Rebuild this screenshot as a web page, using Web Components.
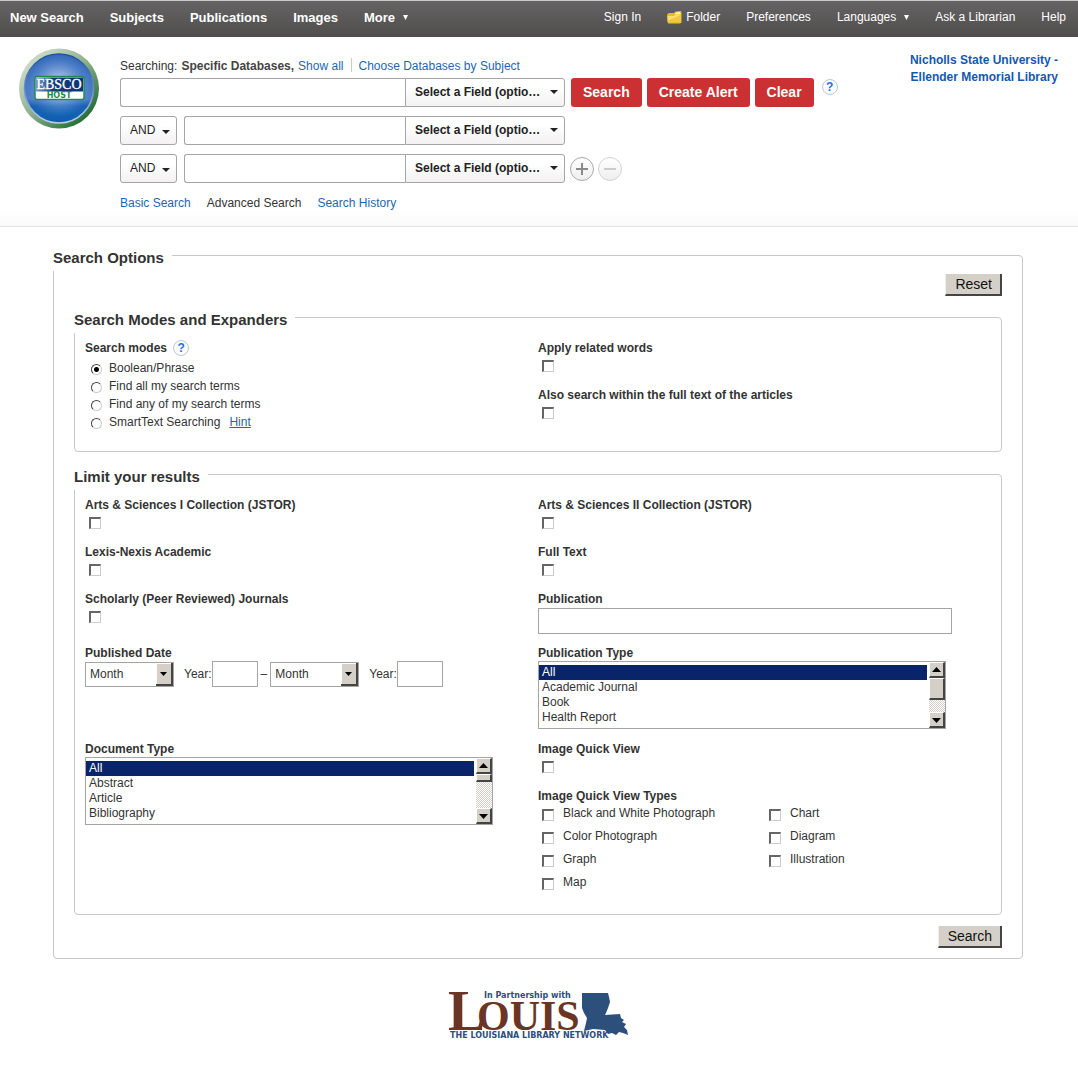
<!DOCTYPE html>
<html lang="en">
<head>
<meta charset="utf-8">
<title>Advanced Search</title>
<style>
    body {
        margin: 0;
        background: #fff;
        color: #333;
        font: 12px/16px "Liberation Sans", Arial, sans-serif;
    }
    main {
        padding: 12px 55px 0 53px;
    }
    .actions {
        display: flex;
        justify-content: flex-end;
    }
    .actions.top {
        padding: 3px 0 5px;
    }
    .actions.bottom {
        padding: 11px 0 10px;
    }
    panel-box + panel-box {
        margin-top: 6px;
    }
    .grid {
        display: grid;
        grid-template-columns: minmax(0, 453px) minmax(0, 1fr);
        align-items: start;
    }
    footer {
        display: flex;
        justify-content: center;
        padding: 31px 0 30px;
    }
</style>
</head>
<body>
<top-bar></top-bar>
<search-header></search-header>
<main>
    <panel-box>
        <span slot="title">Search Options</span>
        <div class="actions top"><classic-button>Reset</classic-button></div>
        <panel-box inset>
            <span slot="title">Search Modes and Expanders</span>
            <div class="grid">
                <search-modes></search-modes>
                <div>
                    <check-field label="Apply related words"></check-field>
                    <check-field label="Also search within the full text of the articles"></check-field>
                </div>
            </div>
        </panel-box>
        <panel-box inset>
            <span slot="title">Limit your results</span>
            <div class="grid">
                <check-field label="Arts &amp; Sciences I Collection (JSTOR)"></check-field>
                <check-field label="Arts &amp; Sciences II Collection (JSTOR)"></check-field>
                <check-field label="Lexis-Nexis Academic"></check-field>
                <check-field label="Full Text"></check-field>
                <check-field label="Scholarly (Peer Reviewed) Journals"></check-field>
                <text-field label="Publication"></text-field>
                <date-range label="Published Date"></date-range>
                <list-field label="Publication Type" thumb="22" options="All|Academic Journal|Book|Health Report"></list-field>
                <list-field label="Document Type" thumb="8" options="All|Abstract|Article|Bibliography"></list-field>
                <div>
                    <check-field label="Image Quick View"></check-field>
                    <check-group label="Image Quick View Types" options="Black and White Photograph|Chart|Color Photograph|Diagram|Graph|Illustration|Map"></check-group>
                </div>
            </div>
        </panel-box>
        <div class="actions bottom"><classic-button>Search</classic-button></div>
    </panel-box>
</main>
<footer><louis-logo></louis-logo></footer>

<script>
    // styles that every control needs inside its own shadow root
    const baseCss = `
        :host { display: block; }
        * { box-sizing: border-box; }
        input, select, button { font: inherit; color: inherit; margin: 0; }
        a { color: #1f66b0; text-decoration: none; }
        .label { display: block; font-weight: bold; }
    `;

    const checkCss = `
        input[type=checkbox] {
            appearance: none;
            flex: none;
            display: block;
            width: 12px;
            height: 12px;
            background: #fff;
            border: 1px solid #ccc;
            border-top: 2px solid #666;
            border-left: 2px solid #666;
        }
    `;

    class BaseElement extends HTMLElement {
        connectedCallback() {
            if (this.shadowRoot) return;
            this.attachShadow({ mode: 'open' });
            this.shadowRoot.innerHTML = `<style>${baseCss}</style>` + this.render();
        }
        get label() {
            return this.getAttribute('label').replace(/&/g, '&amp;');
        }
        get options() {
            return this.getAttribute('options').split('|');
        }
    }

    class TopBar extends BaseElement {
        render() {
            return `
                <style>
                    :host {
                        border-top: 1px solid #c9c9c7;
                        background: linear-gradient(#656363, #504d4d);
                        color: #fff;
                    }
                    nav { display: flex; justify-content: space-between; height: 36px; padding: 0 12px 4px 10px; }
                    div { display: flex; align-items: center; gap: 26px; }
                    .main { font-size: 13px; font-weight: bold; padding-top: 1px; }
                    a { display: flex; align-items: center; color: #fff; white-space: nowrap; }
                    .arrow { width: 5px; height: 5px; margin-left: 8px; fill: #fff; }
                    .folder { margin-right: 4px; }
                </style>
                <nav>
                    <div class="main">
                        <a href="#">New Search</a>
                        <a href="#">Subjects</a>
                        <a href="#">Publications</a>
                        <a href="#">Images</a>
                        <a href="#">More <svg class="arrow" viewBox="0 0 5 5"><path d="M0 0h5L2.5 5z"/></svg></a>
                    </div>
                    <div>
                        <a href="#">Sign In</a>
                        <a href="#"><svg class="folder" width="15" height="13" viewBox="0 0 15 13">
                            <path d="M0 3.5 2 2h5l1.5-1.5L14 0l.5 2v9.5L13 12.500H1z" fill="#e2bd2c"/>
                            <path d="M8.5 1.5 13 1l.5 2-5.500.5z" fill="#fff6b5"/>
                            <path d="M.5 5h6L9 3.5h5v7.500H.5z" fill="#f8df6a"/>
                            <path d="M1 9.5 14 4v7.500H1z" fill="#efc63c"/>
                        </svg>Folder</a>
                        <a href="#">Preferences</a>
                        <a href="#">Languages <svg class="arrow" viewBox="0 0 5 5"><path d="M0 0h5L2.5 5z"/></svg></a>
                        <a href="#">Ask a Librarian</a>
                        <a href="#">Help</a>
                    </div>
                </nav>
            `;
        }
    }
    customElements.define('top-bar', TopBar);

    class EbscoLogo extends BaseElement {
        render() {
            return `
                <svg width="80" height="81" viewBox="0 0 80 81" role="img" aria-label="EBSCO Host">
                    <defs>
                        <linearGradient id="ring" x1="0.1" y1="0.1" x2="0.85" y2="0.9">
                            <stop offset="0" stop-color="#d3e0cf"/>
                            <stop offset="0.5" stop-color="#8fb08c"/>
                            <stop offset="1" stop-color="#1f6a33"/>
                        </linearGradient>
                        <linearGradient id="ball" x1="0" y1="0" x2="0" y2="1">
                            <stop offset="0" stop-color="#2f65b8"/>
                            <stop offset="0.65" stop-color="#4f7fc8"/>
                            <stop offset="0.75" stop-color="#1a63b4"/>
                            <stop offset="1" stop-color="#0a5fb0"/>
                        </linearGradient>
                        <radialGradient id="glow">
                            <stop offset="0" stop-color="#dfe8fa"/>
                            <stop offset="1" stop-color="#6f9ade" stop-opacity="0"/>
                        </radialGradient>
                        <linearGradient id="plate" x1="0" y1="0" x2="1" y2="0">
                            <stop offset="0" stop-color="#7b9cc4"/>
                            <stop offset="0.35" stop-color="#123e7c"/>
                            <stop offset="1" stop-color="#0b3474"/>
                        </linearGradient>
                        <linearGradient id="rim" x1="0" y1="0" x2="0" y2="1">
                            <stop offset="0" stop-color="#1b4f9c"/>
                            <stop offset="1" stop-color="#b9cdf0"/>
                        </linearGradient>
                    </defs>
                    <circle cx="40" cy="40.5" r="40" fill="url(#ring)"/>
                    <circle cx="40" cy="40.5" r="34.5" fill="url(#ball)" stroke="url(#rim)" stroke-width="1.5"/>
                    <ellipse cx="40" cy="37" rx="33" ry="32" fill="url(#glow)"/>
                    <rect x="16" y="28.5" width="49" height="23" rx="2" fill="#fff" stroke="#1f8a50" stroke-width="1.5"/>
                    <rect x="17" y="29.5" width="47" height="14" fill="url(#plate)"/>
                    <text x="40" y="41" text-anchor="middle" fill="#fff" stroke="#fff" stroke-width="0.3" font-family="Liberation Serif, serif" font-size="14">EBSCO</text>
                    <text x="40" y="50" text-anchor="middle" fill="#1f8a50" font-family="DejaVu Sans, sans-serif" font-weight="bold" font-size="8">HOST</text>
                </svg>
            `;
        }
    }
    customElements.define('ebsco-logo', EbscoLogo);

    class HelpIcon extends BaseElement {
        render() {
            return `
                <style>
                    button {
                        display: block;
                        width: 16px;
                        height: 16px;
                        padding: 0;
                        border: 1px solid #bfc6cf;
                        border-radius: 50%;
                        background: #fbfbfd;
                        color: #2b6fe0;
                        font-weight: bold;
                        line-height: 14px;
                        text-align: center;
                    }
                </style>
                <button type="button" aria-label="Help">?</button>
            `;
        }
    }
    customElements.define('help-icon', HelpIcon);

    class SearchRow extends BaseElement {
        render() {
            const op = this.hasAttribute('operator') ? `
                <span class="drop op">
                    <select aria-label="Operator"><option>AND</option><option>OR</option><option>NOT</option></select>
                    <svg width="8" height="4" viewBox="0 0 8 4"><path d="M0 0h8L4 4z"/></svg>
                </span>` : '';
            return `
                <style>
                    :host { display: flex; align-items: center; height: 29px; }
                    .box { display: flex; width: 445px; height: 29px; }
                    .drop { display: grid; }
                    .drop > * { grid-area: 1 / 1; }
                    .drop svg { align-self: center; justify-self: end; margin: 0 7px 1px 0; fill: #222; pointer-events: none; }
                    input, select { height: 29px; border: 1px solid #a5a5a5; background: #fff; }
                    input { flex: 1; min-width: 0; border-right: 0; border-radius: 3px 0 0 3px; padding: 0 8px; }
                    select {
                        appearance: none;
                        width: 100%;
                        padding: 0 20px 2px 9px;
                        background: linear-gradient(#fff 30%, #f3f1f2);
                        color: #222;
                    }
                    .op { width: 57px; margin-right: 7px; }
                    .op select { border-radius: 3px; }
                    .op svg { margin: 3px 7px 0 0; }
                    .field { width: 160px; font-weight: bold; }
                    .field select { border-radius: 0 3px 3px 0; }
                </style>
                <span class="box">
                    ${op}
                    <input type="text" aria-label="Search term">
                    <span class="drop field">
                        <select aria-label="Field"><option>Select a Field (optio…</option></select>
                        <svg width="8" height="4" viewBox="0 0 8 4"><path d="M0 0h8L4 4z"/></svg>
                    </span>
                </span>
                <slot></slot>
            `;
        }
    }
    customElements.define('search-row', SearchRow);

    class SearchHeader extends BaseElement {
        render() {
            return `
                <style>
                    :host {
                        display: flex;
                        align-items: flex-start;
                        padding: 11px 20px 15px 19px;
                        border-bottom: 1px solid #e3e3e3;
                        background: linear-gradient(#fff 90%, #fafafa);
                    }
                    form { flex: 1; padding: 10px 0 0 21px; }
                    search-row { margin-bottom: 9px; }
                    .db { display: flex; height: 20px; }
                    .db b { margin: 0 4px; color: #444; }
                    .db a + a { margin-left: 8px; padding-left: 6px; border-left: 1px solid #ccc; height: 14px; }
                    .red {
                        height: 29px;
                        margin-left: 5px;
                        padding: 0 12px 1px;
                        border: 0;
                        border-radius: 3px;
                        background: #cb3033;
                        color: #fff;
                        font-size: 14px;
                        font-weight: bold;
                    }
                    .first { margin-left: 6px; }
                    help-icon { margin: 0 0 11px 8px; }
                    .round {
                        display: flex;
                        width: 24px;
                        height: 24px;
                        margin-left: 4px;
                        padding: 5px;
                        border: 1px solid #aaa;
                        border-radius: 50%;
                        background: linear-gradient(#fff, #eee);
                    }
                    .round.add { margin-left: 5px; }
                    .round path { stroke: #8a8a8a; stroke-width: 2; }
                    .round:disabled { border-color: #d3d3d3; }
                    .round:disabled path { stroke: #ccc; }
                    .tabs { display: flex; gap: 16px; padding-top: 3px; }
                    .org { font-weight: bold; line-height: 17px; text-align: right; padding-top: 4px; color: #1458b0; }
                </style>
                <ebsco-logo></ebsco-logo>
                <form>
                    <div class="db">Searching: <b>Specific Databases,</b> <a href="#">Show all</a><a href="#">Choose Databases by Subject</a></div>
                    <search-row>
                        <button type="button" class="red first">Search</button>
                        <button type="button" class="red">Create Alert</button>
                        <button type="button" class="red">Clear</button>
                        <help-icon></help-icon>
                    </search-row>
                    <search-row operator></search-row>
                    <search-row operator>
                        <button type="button" class="round add" aria-label="Add row"><svg width="12" height="12" viewBox="0 0 12 12"><path d="M0 6h12M6 0v12"/></svg></button>
                        <button type="button" class="round" aria-label="Remove row" disabled><svg width="12" height="12" viewBox="0 0 12 12"><path d="M0 6h12"/></svg></button>
                    </search-row>
                    <div class="tabs"><a href="#">Basic Search</a><span>Advanced Search</span><a href="#">Search History</a></div>
                </form>
                <a class="org" href="#">Nicholls State University -<br>Ellender Memorial Library</a>
            `;
        }
    }
    customElements.define('search-header', SearchHeader);

    class PanelBox extends BaseElement {
        render() {
            return `
                <style>
                    fieldset {
                        min-width: 0;
                        margin: 0;
                        padding: 0 20px;
                        border: 1px solid #c8c8c8;
                        border-radius: 4px;
                    }
                    /* the white legend also hides the corner of the border */
                    legend {
                        height: 32px;
                        margin-left: -21px;
                        padding: 6px 8px 0 0;
                        background: #fff;
                        font-size: 15px;
                        font-weight: bold;
                        line-height: 26px;
                    }
                    :host([inset]) fieldset { padding: 7px 10px 17px; }
                    :host([inset]) legend { margin-left: -11px; }
                </style>
                <fieldset>
                    <legend><slot name="title"></slot></legend>
                    <slot></slot>
                </fieldset>
            `;
        }
    }
    customElements.define('panel-box', PanelBox);

    class ClassicButton extends BaseElement {
        render() {
            return `
                <style>
                    button {
                        display: block;
                        height: 22px;
                        padding: 0 8px 0 9px;
                        border: solid #444;
                        border-width: 0 2px 2px 0;
                        border-left: 1px solid #eee;
                        background: #d4d0c8;
                        color: #111;
                        font-size: 14px;
                        line-height: 20px;
                    }
                </style>
                <button type="button"><slot></slot></button>
            `;
        }
    }
    customElements.define('classic-button', ClassicButton);

    class SearchModes extends BaseElement {
        render() {
            const modes = ['Boolean/Phrase', 'Find all my search terms', 'Find any of my search terms', 'SmartText Searching'];
            const rows = modes.map((mode, indx) => `
                <div class="row">
                    <input type="radio" name="mode" id="mode${indx}" ${indx == 0 ? 'checked' : ''}>
                    <label for="mode${indx}">${mode}</label>
                    ${indx == 3 ? '<a href="#">Hint</a>' : ''}
                </div>`).join('');
            return `
                <style>
                    .head { display: flex; align-items: center; gap: 6px; height: 16px; margin-bottom: 3px; font-weight: bold; }
                    .row { display: flex; align-items: center; height: 18px; padding-left: 6px; }
                    .row a { margin-left: 9px; text-decoration: underline; }
                    input {
                        appearance: none;
                        width: 11px;
                        height: 11px;
                        margin: 2px 7px 0 0;
                        border: 1px solid;
                        border-color: #444 #ccc #ccc #444;
                        border-radius: 50%;
                        background: #fff;
                    }
                    input:checked { background: radial-gradient(circle, #000 2px, #fff 3px); }
                </style>
                <div class="head">Search modes <help-icon></help-icon></div>
                ${rows}
            `;
        }
    }
    customElements.define('search-modes', SearchModes);

    class CheckField extends BaseElement {
        render() {
            return `
                <style>
                    ${checkCss}
                    :host { padding-bottom: 15px; }
                    input[type=checkbox] { margin: 4px 0 0 4px; }
                </style>
                <label class="label" for="check">${this.label}</label>
                <input type="checkbox" id="check">
            `;
        }
    }
    customElements.define('check-field', CheckField);

    class TextField extends BaseElement {
        render() {
            return `
                <style>
                    :host { padding-bottom: 11px; }
                    input {
                        display: block;
                        width: 100%;
                        max-width: 414px;
                        height: 26px;
                        margin-top: 1px;
                        border: 1px solid #a5a5a5;
                    }
                </style>
                <label class="label" for="text">${this.label}</label>
                <input type="text" id="text">
            `;
        }
    }
    customElements.define('text-field', TextField);

    class DateRange extends BaseElement {
        month(name) {
            return `
                <span class="month">
                    <select aria-label="${name} month"><option>Month</option></select>
                    <svg width="17" height="23" viewBox="0 0 17 23">
                        <path d="M0 0h17v23H0z" fill="#444"/>
                        <path d="M0 0h15v21H0z" fill="#fff"/>
                        <path d="M1 1h14v20H1z" fill="#d4d0c8"/>
                        <path d="M4 9h7l-3.5 4z"/>
                    </svg>
                </span>`;
        }
        render() {
            return `
                <style>
                    .row { display: flex; align-items: center; }
                    .month { display: grid; margin-right: 10px; }
                    .month > * { grid-area: 1 / 1; }
                    .month svg { align-self: center; justify-self: end; margin-right: 1px; pointer-events: none; }
                    select { appearance: none; width: 89px; height: 25px; padding: 0 20px 0 4px; border: 1px solid #a5a5a5; background: #fff; }
                    input { width: 46px; height: 26px; border: 1px solid #a5a5a5; }
                    .dash { margin: 0 3px; }
                </style>
                <span class="label">${this.label}</span>
                <div class="row">
                    ${this.month('From')}
                    <label for="from">Year:</label><input type="text" id="from">
                    <span class="dash">–</span>
                    ${this.month('To')}
                    <label for="to">Year:</label><input type="text" id="to">
                </div>
            `;
        }
    }
    customElements.define('date-range', DateRange);

    class ListField extends BaseElement {
        render() {
            const thumb = this.getAttribute('thumb');
            return `
                <style>
                    :host { padding-bottom: 12px; }
                    .box { display: flex; width: 408px; max-width: 100%; height: 68px; border: 1px solid #a5a5a5; }
                    select {
                        appearance: none;
                        flex: 1;
                        min-width: 0;
                        height: 66px;
                        padding: 3px 0 0;
                        border: 0;
                        outline: 0;
                        background: #fff;
                        overflow: hidden;
                        scrollbar-width: none;
                    }
                    option { height: 15px; min-height: 15px; padding: 0 3px; line-height: 15px; color: #333; }
                    option:checked { background: #0a246a linear-gradient(#0a246a, #0a246a); color: #fff; }
                    .bar {
                        display: flex;
                        flex-direction: column;
                        width: 16px;
                        margin-left: 2px;
                        background: repeating-conic-gradient(#d4d0c8 0 25%, #fff 0 50%) 0 0 / 2px 2px;
                    }
                    .bar > * {
                        flex: none;
                        display: block;
                        width: 16px;
                        height: 16px;
                        background: #d4d0c8;
                        border: 1px solid #fff;
                        border-right: 2px solid #444;
                        border-bottom: 2px solid #444;
                    }
                    .down { margin-top: auto; }
                </style>
                <label class="label" for="list">${this.label}</label>
                <div class="box">
                    <select id="list" size="4">
                        ${this.options.map((text, indx) => `<option ${indx == 0 ? 'selected' : ''}>${text}</option>`).join('')}
                    </select>
                    <div class="bar" aria-hidden="true">
                        <svg viewBox="0 0 13 13"><path d="M2 9h9L6.5 4z"/></svg>
                        <span style="height: ${thumb}px"></span>
                        <svg class="down" viewBox="0 0 13 13"><path d="M2 5h9L6.5 10z"/></svg>
                    </div>
                </div>
            `;
        }
    }
    customElements.define('list-field', ListField);

    class CheckGroup extends BaseElement {
        render() {
            return `
                <style>
                    ${checkCss}
                    :host { padding-bottom: 4px; }
                    .items { display: grid; grid-template-columns: 227px 1fr; margin-top: -3px; }
                    .item { display: flex; align-items: center; gap: 9px; height: 23px; padding-left: 4px; }
                    input[type=checkbox] { margin-top: 4px; }
                </style>
                <span class="label">${this.label}</span>
                <div class="items">
                    ${this.options.map((text, indx) => `
                        <div class="item"><input type="checkbox" id="c${indx}"><label for="c${indx}">${text}</label></div>
                    `).join('')}
                </div>
            `;
        }
    }
    customElements.define('check-group', CheckGroup);

    class LouisLogo extends BaseElement {
        render() {
            return `
                <style>
                    svg { display: block; overflow: visible; }
                </style>
                <svg width="182" height="50" viewBox="0 0 182 50" role="img" aria-label="LOUIS">
                    <g fill="#6a3524" font-family="Liberation Serif, serif" font-weight="bold">
                        <text x="0" y="40" font-size="56">L</text>
                        <text x="29" y="40" font-size="42">OUIS</text>
                    </g>
                    <path fill="#2d4f7c" d="M134 3H160L161 7 162 12 160 18 158 23 157 25 172 24 173 28 176 30 174 32 178 34 176 37 179 40 180 45 175 43 171 42 168 45 164 43 160 44 157 40 145 39 136 41 138 33 139 28 136 23 134 18z"/>
                    <g fill="#2d4f7c" font-family="DejaVu Sans, sans-serif" font-weight="bold">
                        <text x="36" y="8" font-size="8">In Partnership with</text>
                        <text x="2" y="48" font-size="8">THE LOUISIANA LIBRARY NETWORK</text>
                    </g>
                </svg>
            `;
        }
    }
    customElements.define('louis-logo', LouisLogo);
</script>
</body>
</html>
